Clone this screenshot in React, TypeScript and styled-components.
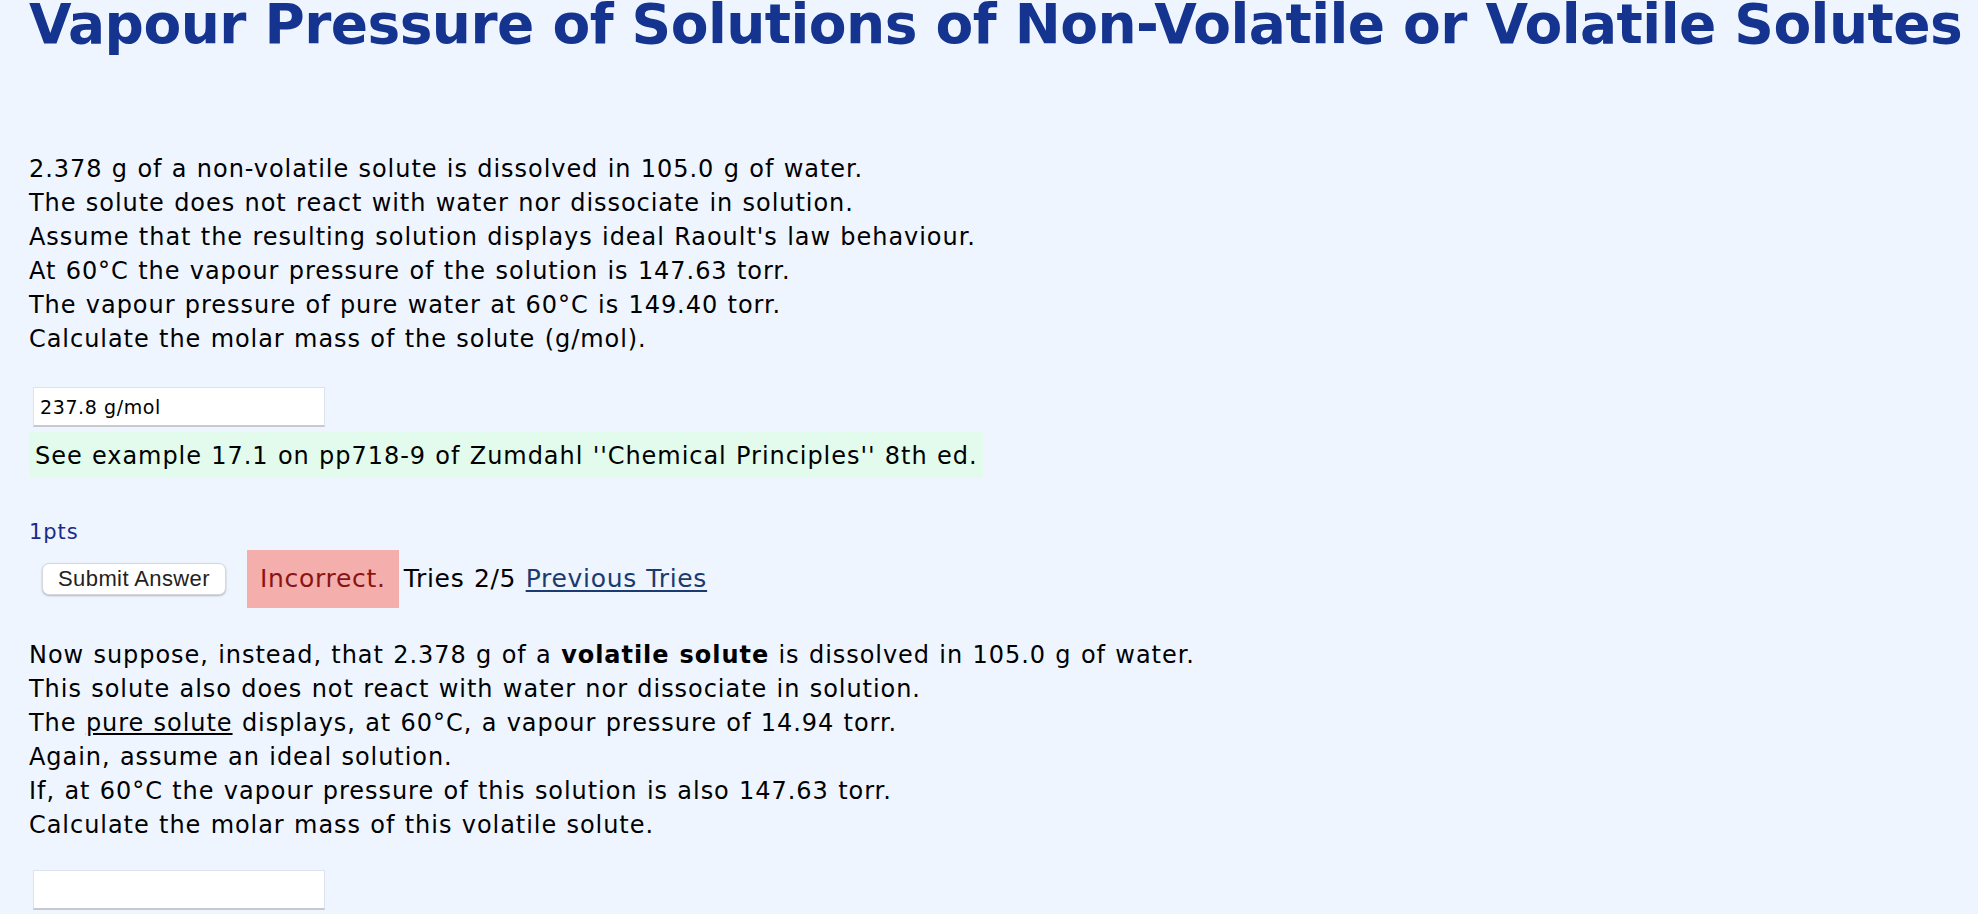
import * as React from 'react';
import styled, { createGlobalStyle } from 'styled-components';

const GlobalStyle = createGlobalStyle`
  html, body {
    margin: 0;
    padding: 0;
    background: #eef5ff;
  }
  body {
    font-family: 'DejaVu Sans', Verdana, sans-serif;
    color: #000;
    overflow: hidden;
  }
`;

const Page = styled.div`
  padding: 0 0 0 29px;
  height: 914px;
  box-sizing: border-box;
  letter-spacing: 0.95px;
  word-spacing: 0.8px;
`;

const Title = styled.h1`
  margin: 0;
  font-size: 55px;
  line-height: 48px;
  font-weight: bold;
  color: #15348f;
  white-space: nowrap;
  letter-spacing: -0.55px;
  word-spacing: 0;
`;

const Question = styled.div<{ $top: number }>`
  margin-top: ${(p) => p.$top}px;
  font-size: 24px;
  line-height: 34px;
`;

const Line = styled.div``;

const AnswerInput = styled.input<{ $top: number }>`
  display: block;
  margin: ${(p) => p.$top}px 0 0 4px;
  width: 292px;
  height: 40px;
  box-sizing: border-box;
  padding: 0 6px;
  border: 1px solid #dbe3ee;
  border-bottom: 2px solid #c6cacf;
  background: #fff;
  font-family: 'DejaVu Sans', Verdana, sans-serif;
  font-size: 19px;
  letter-spacing: 0.6px;
  color: #000;
  outline: none;
`;

const Hint = styled.div`
  display: inline-block;
  margin-top: 5px;
  padding: 7px 6px 5px;
  background: #e3fbec;
  font-size: 24px;
  line-height: 34px;
`;

const Points = styled.div`
  margin-top: 42px;
  font-size: 21px;
  line-height: 24px;
  color: #1a2a8c;
`;

const SubmitRow = styled.div`
  display: flex;
  align-items: center;
  margin-top: 6px;
  font-size: 25px;
  letter-spacing: 0.7px;
`;

const SubmitButton = styled.button`
  margin-left: 13px;
  width: 184px;
  height: 32px;
  box-sizing: border-box;
  padding: 0;
  background: #fff;
  border: 1px solid #d6d8dc;
  border-radius: 7px;
  box-shadow: 0 1px 2px rgba(0, 0, 0, 0.25);
  font-family: 'Liberation Sans', Arial, sans-serif;
  font-size: 22px;
  letter-spacing: 0.4px;
  word-spacing: 0;
  color: #222;
`;

const Verdict = styled.span`
  margin-left: 21px;
  height: 58px;
  line-height: 58px;
  padding: 0 13px 0 13px;
  background: #f4aeab;
  color: #8a1414;
`;

const Tries = styled.span`
  margin-left: 5px;
  line-height: 58px;
  white-space: pre;
`;

const TriesLink = styled.a`
  color: #1b3a70;
  text-decoration: underline;
  text-underline-offset: 3px;
  cursor: pointer;
`;

const Under = styled.span`
  text-decoration: underline;
`;

const App = () => (
  <>
    <GlobalStyle />
    <Page>
      <Title>Vapour Pressure of Solutions of Non-Volatile or Volatile Solutes</Title>

      <Question $top={104}>
        <Line>2.378 g of a non-volatile solute is dissolved in 105.0 g of water.</Line>
        <Line>The solute does not react with water nor dissociate in solution.</Line>
        <Line>Assume that the resulting solution displays ideal Raoult's law behaviour.</Line>
        <Line>At 60°C the vapour pressure of the solution is 147.63 torr.</Line>
        <Line>The vapour pressure of pure water at 60°C is 149.40 torr.</Line>
        <Line>Calculate the molar mass of the solute (g/mol).</Line>
      </Question>

      <AnswerInput $top={31} defaultValue="237.8 g/mol" />
      <Hint>See example 17.1 on pp718-9 of Zumdahl ''Chemical Principles'' 8th ed.</Hint>

      <Points>1pts</Points>
      <SubmitRow>
        <SubmitButton>Submit Answer</SubmitButton>
        <Verdict>Incorrect.</Verdict>
        <Tries>
          Tries 2/5 <TriesLink>Previous Tries</TriesLink>
        </Tries>
      </SubmitRow>

      <Question $top={30}>
        <Line>
          Now suppose, instead, that 2.378 g of a <b>volatile solute</b> is dissolved in 105.0 g of water.
        </Line>
        <Line>This solute also does not react with water nor dissociate in solution.</Line>
        <Line>
          The <Under>pure solute</Under> displays, at 60°C, a vapour pressure of 14.94 torr.
        </Line>
        <Line>Again, assume an ideal solution.</Line>
        <Line>If, at 60°C the vapour pressure of this solution is also 147.63 torr.</Line>
        <Line>Calculate the molar mass of this volatile solute.</Line>
      </Question>

      <AnswerInput $top={28} />
    </Page>
  </>
);

export default App;
